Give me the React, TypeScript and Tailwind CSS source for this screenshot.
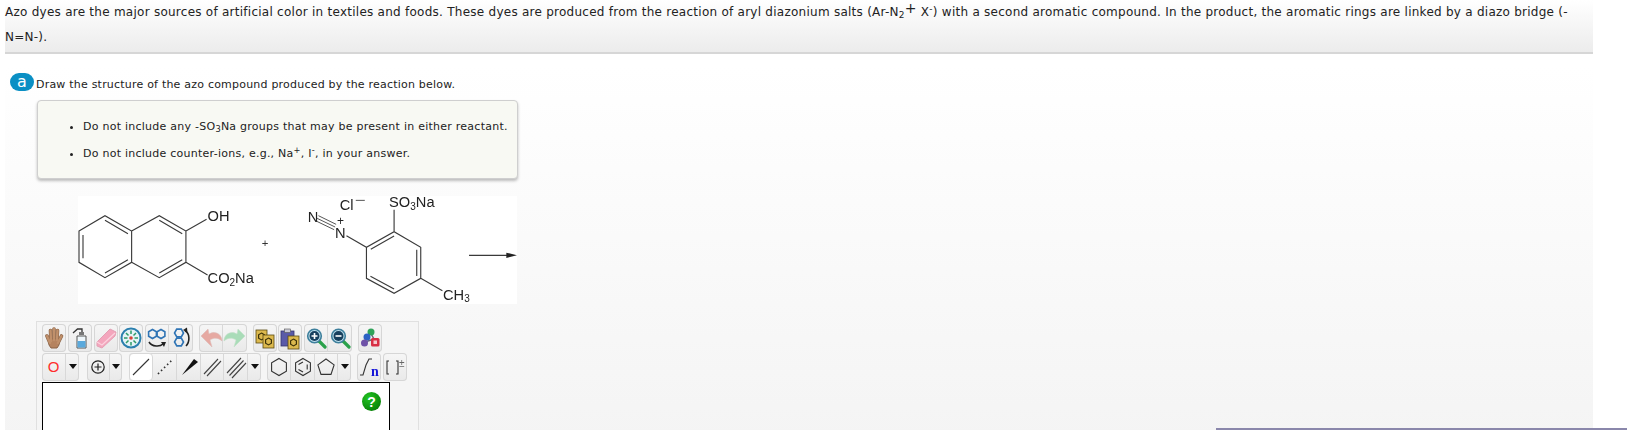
import React from 'react'

const TEXT_FONT = "font-['DejaVu_Sans',sans-serif]"

function Btn({ children, w = 'w-6', active = false }: { children?: React.ReactNode; w?: string; active?: boolean }) {
  return (
    <div
      className={`${w} h-[28px] shrink-0 flex items-center justify-center border-r border-[#d8d8d8] last:border-r-0 ${
        active ? 'bg-white rounded-[4px] border border-[#c4c4c4]' : ''
      }`}
    >
      {children}
    </div>
  )
}

function Group({ children, className = '' }: { children: React.ReactNode; className?: string }) {
  return (
    <div className={`flex shrink-0 h-[28px] rounded-[4px] shadow-[inset_0_0_0_1px_#d6d6d6] bg-gradient-to-b from-[#f6f6f6] to-[#e9e9e9] ${className}`}>
      {children}
    </div>
  )
}

function Icon({ children }: { children: React.ReactNode }) {
  return (
    <svg width="24" height="28" viewBox="0 0 24 28" className="shrink-0 blur-[0.3px]">
      {children}
    </svg>
  )
}

function Caret() {
  return (
    <svg width="8" height="6" viewBox="0 0 8 6">
      <path d="M0 0H8L4 5Z" fill="#111" />
    </svg>
  )
}

function hexPoints(cx: number, cy: number, r: number, sides = 6, rot = -90) {
  const pts: string[] = []
  for (let i = 0; i < sides; i++) {
    const a = ((rot + (360 / sides) * i) * Math.PI) / 180
    pts.push(`${(cx + r * Math.cos(a)).toFixed(1)},${(cy + r * Math.sin(a)).toFixed(1)}`)
  }
  return pts.join(' ')
}

function HandIcon() {
  const fingers = ['M8 19L5 12', 'M9 17L8.5 6.5', 'M12 16V5', 'M15 16L15.500 6.5', 'M16 19L19.500 12']
  return (
    <Icon>
      {fingers.map((d) => (
        <path key={d} d={d} stroke="#8a6347" strokeWidth="3.6" strokeLinecap="round" fill="none" />
      ))}
      <path d="M6.5 15H17.5L17 21L15 24H9L7 21Z" fill="#b5835f" stroke="#8a6347" />
      {fingers.map((d) => (
        <path key={d + 'b'} d={d} stroke="#c0906b" strokeWidth="2.4" strokeLinecap="round" fill="none" />
      ))}
    </Icon>
  )
}

function BottleIcon() {
  return (
    <Icon>
      <path d="M5 9L9.5 5H14V10" stroke="#333" strokeWidth="1.3" fill="none" />
      <rect x="11" y="8" width="5" height="3" fill="#777" />
      <path d="M9 12H18V24H9Z" fill="#eef6fa" stroke="#555" />
      <rect x="9.5" y="17" width="8" height="6.5" fill="#5aa9dc" />
    </Icon>
  )
}

function EraserIcon() {
  return (
    <Icon>
      <path d="M3 18L16 5L22 8L21 12L8 24L3 22Z" fill="#f4a6bd" stroke="#e3a0b4" />
      <path d="M3 18L8 21L21 9" stroke="#fbd3df" strokeWidth="1.2" fill="none" />
    </Icon>
  )
}

function CleanIcon() {
  return (
    <Icon>
      <circle cx="12" cy="14" r="9.500" fill="#e6f3f6" stroke="#2b7fae" strokeWidth="2" />
      <path d="M12 6.5V10M12 18V21.5M5 14H8.5M15.500 14H19M7 9L9.500 11.500M17 9L14.500 11.500M7 19L9.500 16.500M17 19L14.500 16.500" stroke="#2d9a68" strokeWidth="1.5" />
      <circle cx="12" cy="14" r="1.8" fill="#d9443c" />
    </Icon>
  )
}

function RotateLeftIcon() {
  return (
    <Icon>
      <polygon points={hexPoints(7.5, 10, 4.5)} fill="none" stroke="#2f74b5" strokeWidth="1.6" />
      <polygon points={hexPoints(16, 10, 4.5)} fill="none" stroke="#2f74b5" strokeWidth="1.6" />
      <path d="M4 18C7 23 15 23 18 20" stroke="#222" strokeWidth="1.6" fill="none" />
      <path d="M16 18L21 18L19 23Z" fill="#222" />
    </Icon>
  )
}

function RotateRightIcon() {
  return (
    <Icon>
      <polygon points={hexPoints(10, 9, 4.5, 6, 0)} fill="none" stroke="#2f74b5" strokeWidth="1.6" />
      <polygon points={hexPoints(10, 18, 4.5, 6, 0)} fill="none" stroke="#2f74b5" strokeWidth="1.6" />
      <path d="M16 7C21 9 21 18 17 22" stroke="#222" strokeWidth="1.6" fill="none" />
      <path d="M14 6L18 3.500L18.500 9Z" fill="#222" />
    </Icon>
  )
}

function UndoIcon() {
  return (
    <Icon>
      <path d="M2 12L9 5L10 10C17 6 23 11 23 17C20 14 15 13 11 16L13 23Z" fill="#e6a9a2" stroke="#dcbcb8" strokeWidth="0.6" />
    </Icon>
  )
}

function RedoIcon() {
  return (
    <Icon>
      <path d="M22 12L15 5L14 10C7 6 1 11 1 17C4 14 9 13 13 16L11 23Z" fill="#a9dcb8" stroke="#c2dfc9" strokeWidth="0.6" />
    </Icon>
  )
}

function GoldDoc({ x, y }: { x: number; y: number }) {
  return (
    <g>
      <rect x={x} y={y} width="11" height="13" fill="#dcb94e" stroke="#5a4a12" strokeWidth="0.8" />
      <polygon points={hexPoints(x + 5.5, y + 6.5, 3.4)} fill="none" stroke="#3d3208" strokeWidth="1.2" />
    </g>
  )
}

function CopyIcon() {
  return (
    <Icon>
      <GoldDoc x={3} y={6} />
      <GoldDoc x={10} y={11} />
    </Icon>
  )
}

function PasteIcon() {
  return (
    <Icon>
      <rect x="3" y="7" width="13" height="15" fill="#5a5aa8" stroke="#35356e" strokeWidth="0.8" />
      <rect x="6.500" y="5" width="6" height="3.500" fill="#c9c9d6" stroke="#555" strokeWidth="0.6" />
      <GoldDoc x={10} y={12} />
    </Icon>
  )
}

function ZoomIcon({ minus = false }: { minus?: boolean }) {
  return (
    <Icon>
      <path d="M15 17L21 23" stroke="#2aa14a" strokeWidth="3.200" strokeLinecap="round" />
      <circle cx="10.500" cy="12" r="6.800" fill="#bfe0ee" stroke="#3d7f9c" strokeWidth="1.600" />
      <circle cx="10.500" cy="12" r="5" fill="#17405e" />
      <path d={minus ? 'M7.500 12H13.500' : 'M7.500 12H13.500M10.500 9V15'} stroke="#fff" strokeWidth="1.600" />
    </Icon>
  )
}

function ColorIcon() {
  return (
    <Icon>
      <path d="M12 8L16 15M7 18L16 15" stroke="#667" strokeWidth="1.500" />
      <circle cx="13" cy="8" r="3.500" fill="#2fa35a" />
      <circle cx="9" cy="13" r="3.500" fill="#2c62c4" />
      <circle cx="6.500" cy="19" r="3.500" fill="#6f52a8" />
      <rect x="13" y="14" width="8.500" height="8.500" rx="1.500" fill="#d82f45" />
      <rect x="15.500" y="16.500" width="3.500" height="3.500" fill="#f5c9cf" />
    </Icon>
  )
}

function PlusCircleIcon() {
  return (
    <svg width="16" height="16" viewBox="0 0 16 16">
      <circle cx="8" cy="8" r="6.200" fill="none" stroke="#222" strokeWidth="1.200" />
      <path d="M4.500 8H11.500M8 4.500V11.500" stroke="#222" strokeWidth="1.200" />
    </svg>
  )
}

function BondIcon({ kind }: { kind: 'single' | 'dash' | 'wedge' | 'double' | 'triple' }) {
  return (
    <Icon>
      {kind === 'single' && <path d="M4 22L20 6" stroke="#333" strokeWidth="1.100" />}
      {kind === 'dash' && <path d="M5 21L20 6" stroke="#333" strokeWidth="1.700" strokeDasharray="1.500 2.800" />}
      {kind === 'wedge' && <path d="M5 22L17 6L21 9Z" fill="#111" />}
      {kind === 'double' && <path d="M4 21L18 6M7 23L21 8" stroke="#444" strokeWidth="1.100" />}
      {kind === 'triple' && <path d="M3 20L17 5M5.500 22.500L19.500 7.500M8 25L22 10" stroke="#444" strokeWidth="1.100" />}
    </Icon>
  )
}

function RingIcon({ kind }: { kind: 'hex' | 'benzene' | 'penta' }) {
  if (kind === 'penta') {
    return (
      <Icon>
        <polygon points={hexPoints(12, 14.500, 8.500, 5)} fill="none" stroke="#333" strokeWidth="1.100" />
      </Icon>
    )
  }
  return (
    <Icon>
      <polygon points={hexPoints(12, 14, 8.500)} fill="none" stroke="#333" strokeWidth="1.100" />
      {kind === 'benzene' && <path d="M7.500 11.500L12 9M16.200 11.500V16.500M7.500 16.500L12 19" stroke="#333" strokeWidth="1.100" fill="none" />}
    </Icon>
  )
}

function SruIcon() {
  return (
    <Icon>
      <path d="M3 22H6L9 12L12 6H15" stroke="#333" strokeWidth="1.100" fill="none" />
      <text x="14" y="23" fontFamily="Liberation Serif, serif" fontWeight="700" fontSize="14" fill="#1414d8">
        n
      </text>
    </Icon>
  )
}

function BracketIcon() {
  return (
    <Icon>
      <path d="M6 8H4V21H6M13 8H15V21H13" stroke="#333" strokeWidth="1.100" fill="none" />
      <text x="16" y="14" fontFamily="Liberation Sans, sans-serif" fontSize="10" fill="#666">
        ±
      </text>
    </Icon>
  )
}

function Reaction() {
  const line = { stroke: '#3a3a3a', strokeWidth: 3.4, fill: 'none' }
  const label = { fontFamily: 'Liberation Sans, sans-serif', fontSize: 44, fill: '#222' }
  const sub = { fontSize: 30 }
  return (
    <svg width="439" height="108" viewBox="54 33 1318 324" className="block overflow-visible bg-white blur-[0.3px]">
      <path
        {...line}
        d="M57 138L135 92L215 138L215 232L135 278L57 232ZM215 138L298 92L378 138L378 232L298 278L215 232M378 138L440 103M378 232L443 270"
      />
      <path {...line} d="M69 150V220M135 106L204 146M135 264L204 224M298 106L367 146M367 224L298 264" />
      <text {...label} x="443" y="108">OH</text>
      <text {...label} x="443" y="294">CO<tspan {...sub} dy="8">2</tspan><tspan dy="-8">Na</tspan></text>
      <text x="606" y="186" fontFamily="Liberation Sans, sans-serif" fontSize="34" fill="#333">+</text>

      <text {...label} x="744" y="112">N</text>
      <path {...line} strokeWidth={2.6} d="M772 100L826 126M769 108L823 134M776 92L829 118" />
      <text {...label} x="832" y="119" fontSize="36">+</text>
      <text {...label} x="826" y="158">N</text>
      <text {...label} x="840" y="76">Cl</text>
      <path {...line} strokeWidth={2.6} d="M888 46H915" />
      <path {...line} d="M860 152L920 187L1003 140L1083 187L1083 280L1003 325L920 280L920 187M1003 140V74M1083 280L1148 317" />
      <path {...line} d="M933 193L1003 153M1071 194V273M932 274L1003 312" />
      <text {...label} x="988" y="67">SO<tspan {...sub} dy="8">3</tspan><tspan dy="-8">Na</tspan></text>
      <text {...label} x="1150" y="344">CH<tspan {...sub} dy="6">3</tspan></text>
      <path {...line} d="M1228 211H1345" />
      <path d="M1340 203L1372 211L1340 219Z" fill="#222" />
    </svg>
  )
}

function Toolbar() {
  return (
    <div className="ml-[31px] w-[383px] h-[120px] shrink-0 border border-[#e0e0e0] bg-[#f5f5f5] pt-[2px] pl-[5px]">
      <div className="flex">
        <Group className="mr-[2px]"><Btn><HandIcon /></Btn></Group>
        <Group className="mr-[2px]"><Btn><BottleIcon /></Btn></Group>
        <Group className="mr-[1px]"><Btn><EraserIcon /></Btn></Group>
        <Group className="mr-[2px]"><Btn><CleanIcon /></Btn></Group>
        <Group className="mr-[6px]"><Btn><RotateLeftIcon /></Btn><Btn><RotateRightIcon /></Btn></Group>
        <Group className="mr-[6px]"><Btn><UndoIcon /></Btn><Btn><RedoIcon /></Btn></Group>
        <Group className="mr-[1px]"><Btn><CopyIcon /></Btn></Group>
        <Group className="mr-[2px]"><Btn><PasteIcon /></Btn></Group>
        <Group className="mr-[6px]"><Btn><ZoomIcon /></Btn><Btn><ZoomIcon minus /></Btn></Group>
        <Group><Btn><ColorIcon /></Btn></Group>
      </div>
      <div className="flex mt-[1px]">
        <Group className="mr-[8px]">
          <Btn><span className="font-['Liberation_Sans',sans-serif] text-[15px] text-[#ff2d2d]">O</span></Btn>
          <Btn w="w-[13px]"><Caret /></Btn>
        </Group>
        <Group className="mr-[7px]">
          <Btn w="w-[23px]"><PlusCircleIcon /></Btn>
          <Btn w="w-[12px]"><Caret /></Btn>
        </Group>
        <Group className="mr-[6px]">
          <Btn active><BondIcon kind="single" /></Btn>
          <Btn><BondIcon kind="dash" /></Btn>
          <Btn><BondIcon kind="wedge" /></Btn>
          <Btn w="w-[23px]"><BondIcon kind="double" /></Btn>
          <Btn><BondIcon kind="triple" /></Btn>
          <Btn w="w-[13px]"><Caret /></Btn>
        </Group>
        <Group className="mr-[6px]">
          <Btn><RingIcon kind="hex" /></Btn>
          <Btn><RingIcon kind="benzene" /></Btn>
          <Btn w="w-[23px]"><RingIcon kind="penta" /></Btn>
          <Btn w="w-[13px]"><Caret /></Btn>
        </Group>
        <Group className="mr-[2px]"><Btn><SruIcon /></Btn></Group>
        <Group><Btn><BracketIcon /></Btn></Group>
      </div>
      <div className="relative w-[348px] h-[100px] mt-px bg-white border border-black">
        <div className="absolute top-[9px] right-[8px] w-[19px] h-[19px] rounded-full bg-[radial-gradient(circle_at_35%_30%,#22c322,#006f00)] flex items-center justify-center">
          <span className="font-['Liberation_Sans',sans-serif] font-bold text-[14px] leading-none text-white">?</span>
        </div>
      </div>
    </div>
  )
}

export default function App() {
  return (
    <div className={`relative w-[1627px] h-[430px] overflow-hidden bg-white ${TEXT_FONT} text-[11px] text-[#222]`}>
      <div className="ml-[5px] w-[1588px] h-[430px] flex flex-col">
        <header className="h-[54px] shrink-0 border-b-2 border-[#d6d6d6] bg-gradient-to-b from-white to-[#ececec] text-[12px] tracking-[0.255px] leading-[25px]">
          <p>
            Azo dyes are the major sources of artificial color in textiles and foods. These dyes are produced from the reaction of aryl diazonium salts (Ar-N<sub>2</sub>
            <sup className="text-[14px] top-[-3px]">+</sup> X<sup>-</sup>) with a second aromatic compound. In the product, the aromatic rings are linked by a diazo bridge (-
            <br />
            N=N-).
          </p>
        </header>

        <section className="mt-[13px] flex-1 flex flex-col bg-gradient-to-b from-white to-[#f4f4f4]">
          <div className="mt-[6px] ml-[5px] flex items-center h-[18px]">
            <span className="w-[24px] h-[18px] shrink-0 rounded-[9px] bg-[#0a8fc4] text-white text-[16px] leading-[17px] text-center">a</span>
            <span className="ml-[2px] pt-[6px] tracking-[0.21px]">Draw the structure of the azo compound produced by the reaction below.</span>
          </div>

          <div className="mt-[9px] ml-[32px] w-[481px] h-[79px] shrink-0 rounded-[4px] border border-[#cfcfcf] bg-[#f8f9f3] shadow-[0_2px_3px_rgba(0,0,0,0.25)]">
            <ul className="list-disc ml-[45px] mt-[12px] tracking-[0.25px]">
              <li className="h-[27px] leading-[27px]">
                Do not include any -SO<sub>3</sub>Na groups that may be present in either reactant.
              </li>
              <li className="h-[27px] leading-[27px]">
                Do not include counter-ions, e.g., Na<sup>+</sup>, I<sup>-</sup>, in your answer.
              </li>
            </ul>
          </div>

          <div className="mt-[17px] ml-[73px] shrink-0">
            <Reaction />
          </div>

          <div className="mt-[17px]">
            <Toolbar />
          </div>
        </section>
      </div>
      <div className="absolute bottom-0 right-0 w-[411px] h-[2px] bg-[#8a87ab]" />
    </div>
  )
}
